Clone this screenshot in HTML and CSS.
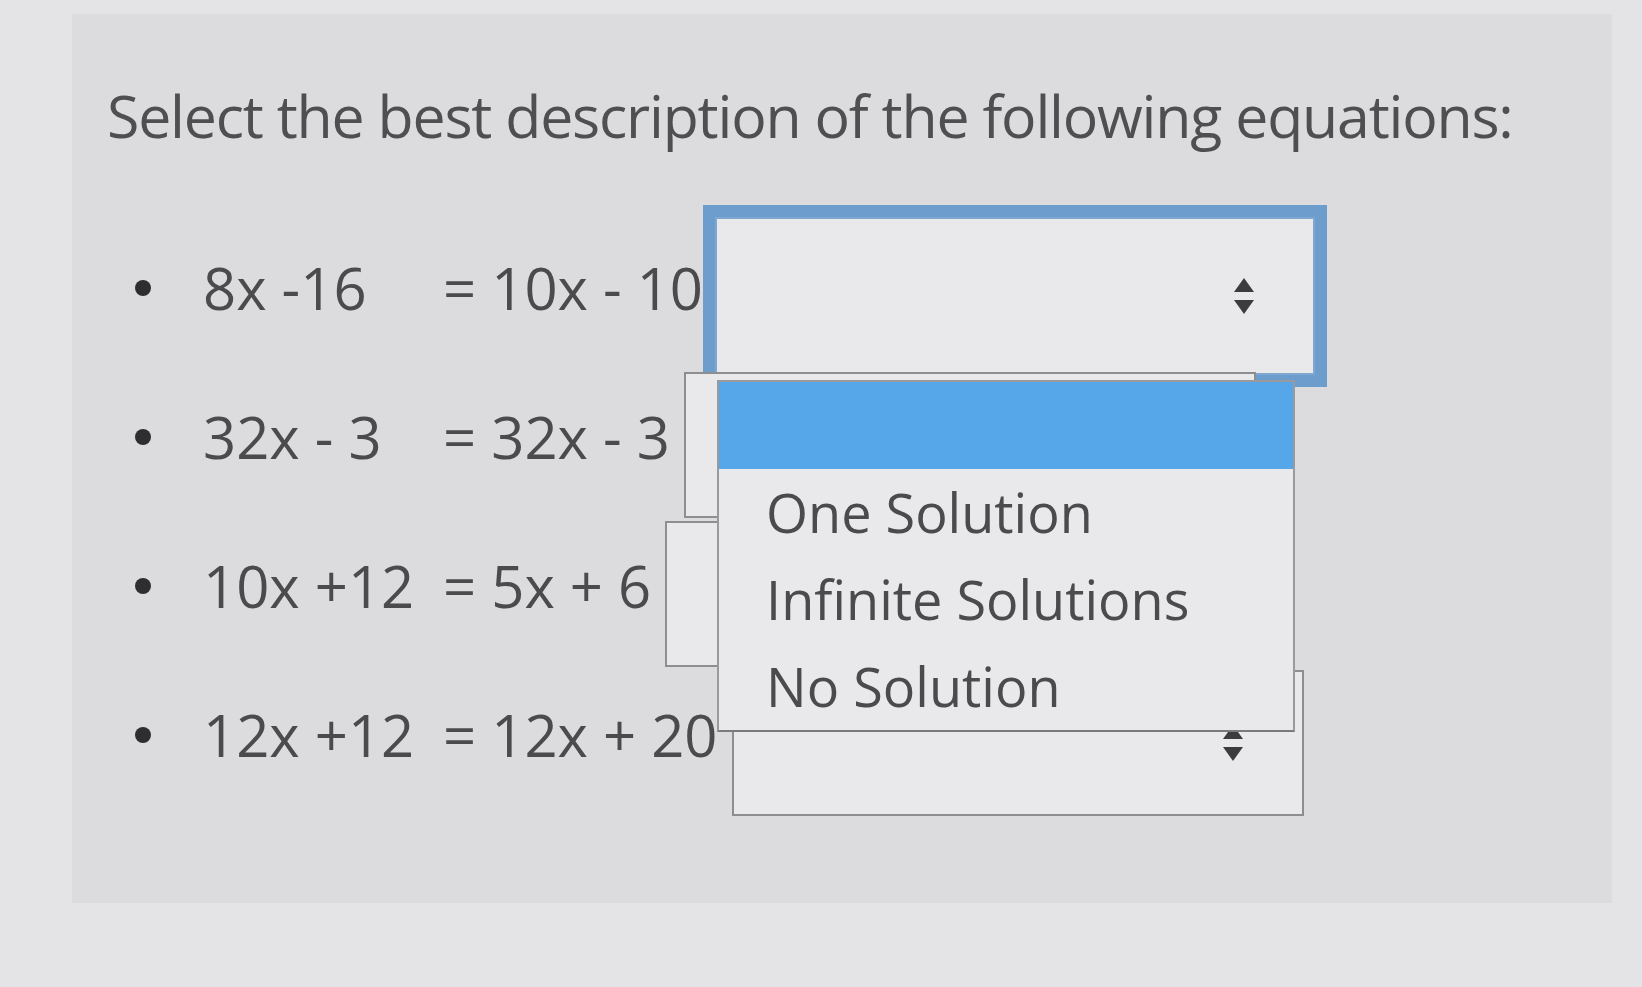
FILE: index.html
```html
<!DOCTYPE html>
<html lang="en">
<head>
<meta charset="utf-8">
<title>Select the best description</title>
<link rel="stylesheet" href="styles.css">
</head>
<body>
<div class="page">
  <div class="panel">
    <h1 class="title">Select the best description of the following equations:</h1>
    <ul class="eqs">
      <li class="row">
        <span class="lhs">8x -16</span><span class="rhs">= 10x - 10</span>
        <span class="select focused">
          <svg class="arrows" width="22" height="40" viewBox="0 0 22 40"><path d="M11 2 L21 16 L1 16 Z" fill="#3c3c3e"/><path d="M1 24 L21 24 L11 38 Z" fill="#3c3c3e"/></svg>
          <span class="listbox">
            <span class="opt active"></span>
            <span class="opt">One Solution</span>
            <span class="opt">Infinite Solutions</span>
            <span class="opt">No Solution</span>
          </span>
        </span>
      </li>
      <li class="row">
        <span class="lhs">32x - 3</span><span class="rhs">= 32x - 3</span>
        <span class="select">
          <svg class="arrows" width="22" height="40" viewBox="0 0 22 40"><path d="M11 2 L21 16 L1 16 Z" fill="#3c3c3e"/><path d="M1 24 L21 24 L11 38 Z" fill="#3c3c3e"/></svg>
        </span>
      </li>
      <li class="row">
        <span class="lhs">10x +12</span><span class="rhs">= 5x + 6</span>
        <span class="select">
          <svg class="arrows" width="22" height="40" viewBox="0 0 22 40"><path d="M11 2 L21 16 L1 16 Z" fill="#3c3c3e"/><path d="M1 24 L21 24 L11 38 Z" fill="#3c3c3e"/></svg>
        </span>
      </li>
      <li class="row">
        <span class="lhs">12x +12</span><span class="rhs">= 12x + 20</span>
        <span class="select">
          <svg class="arrows" width="22" height="40" viewBox="0 0 22 40"><path d="M11 2 L21 16 L1 16 Z" fill="#3c3c3e"/><path d="M1 24 L21 24 L11 38 Z" fill="#3c3c3e"/></svg>
        </span>
      </li>
    </ul>
  </div>
</div>
</body>
</html>
```
FILE: styles.css
```css
html, body {
  margin: 0;
  padding: 0;
}
body {
  background: #e4e4e6;
  font-family: "Open Sans", "Noto Sans", "Liberation Sans", sans-serif;
  color: #4b4b4d;
  width: 1642px;
  height: 987px;
  overflow: hidden;
}
.page {
  padding: 14px 30px 0 72px;
}
.panel {
  background: #dcdcde;
  height: 889px;
  box-sizing: border-box;
  padding: 63px 0 0 35px;
}
.title {
  margin: 0;
  font-size: 59px;
  line-height: 76px;
  letter-spacing: -1.2px;
  font-weight: 400;
  color: #4f4f51;
  white-space: nowrap;
}
.eqs {
  list-style: none;
  margin: 60px 0 0 0;
  padding: 0;
}
.row {
  display: flex;
  align-items: center;
  height: 149px;
  font-size: 58px;
  white-space: nowrap;
}
.row::before {
  content: "";
  width: 16px;
  height: 16px;
  border-radius: 50%;
  background: #2e2e30;
  margin-left: 28px;
  margin-right: 52px;
  flex: none;
}
.lhs {
  display: inline-block;
  width: 240px;
}
.rhs {
  display: inline-block;
}
.select {
  position: relative;
  margin-left: 14px;
  margin-top: 16px;
  width: 572px;
  height: 146px;
  box-sizing: border-box;
  border: 2px solid #8e8e90;
  background: #e9e9eb;
  display: flex;
  justify-content: flex-end;
  align-items: center;
  padding-right: 58px;
}
.select.focused {
  width: 600px;
  height: 158px;
  border-color: #7ea8d2;
  box-shadow: 0 0 0 12px #6c9dcc;
  margin-left: 12px;
}
.arrows {
  display: block;
}
.listbox {
  position: absolute;
  top: 161px;
  left: 0;
  width: 578px;
  background: #e9e9eb;
  border: 2px solid #9a9a9c;
  border-bottom-color: #7a7a7c;
  box-sizing: border-box;
  display: flex;
  flex-direction: column;
  z-index: 5;
}
.opt {
  display: block;
  height: 87px;
  line-height: 87px;
  padding-left: 47px;
  font-size: 54px;
  color: #4b4b4d;
}
.opt.active {
  background: #56a6ea;
}
```
